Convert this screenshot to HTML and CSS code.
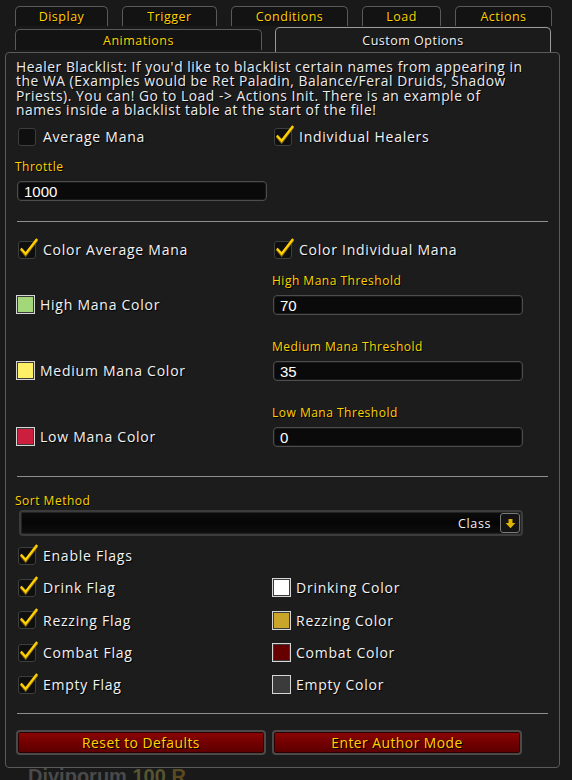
FILE: index.html
```html
<!DOCTYPE html>
<html>
<head>
<meta charset="utf-8">
<link rel="stylesheet" href="styles.css">
</head>
<body>
<div class="tabs">
  <div class="tab-row">
    <div class="tab w-display">Display</div>
    <div class="tab w-trigger">Trigger</div>
    <div class="tab w-cond">Conditions</div>
    <div class="tab w-load">Load</div>
    <div class="tab w-actions">Actions</div>
  </div>
  <div class="tab-row row2">
    <div class="tab w-anim">Animations</div>
    <div class="tab active w-custom">Custom Options</div>
  </div>
</div>

<div class="panel">
  <p class="desc">Healer Blacklist: If you'd like to blacklist certain names from appearing in<br>the WA (Examples would be Ret Paladin, Balance/Feral Druids, Shadow<br>Priests). You can! Go to Load -&gt; Actions Init. There is an example of<br>names inside a blacklist table at the start of the file!</p>

  <div class="grid2 check-row first">
    <div class="cb"><span class="box"></span><span class="lbl">Average Mana</span></div>
    <div class="cb"><span class="box checked"><svg class="tick" viewBox="0 0 22 22"><polyline class="tick-shade" points="3,12 8,18 20,2"/><polyline class="tick-main" points="3,11 8,16.5 20,1"/></svg></span><span class="lbl">Individual Healers</span></div>
  </div>

  <div class="gold throttle-label">Throttle</div>
  <div class="input throttle">1000</div>

  <div class="sep sep1"></div>

  <div class="grid2 check-row color-row">
    <div class="cb"><span class="box checked"><svg class="tick" viewBox="0 0 22 22"><polyline class="tick-shade" points="3,12 8,18 20,2"/><polyline class="tick-main" points="3,11 8,16.5 20,1"/></svg></span><span class="lbl">Color Average Mana</span></div>
    <div class="cb"><span class="box checked"><svg class="tick" viewBox="0 0 22 22"><polyline class="tick-shade" points="3,12 8,18 20,2"/><polyline class="tick-main" points="3,11 8,16.5 20,1"/></svg></span><span class="lbl">Color Individual Mana</span></div>
  </div>

  <div class="thr high">
    <div></div>
    <div class="gold">High Mana Threshold</div>
    <div class="sw-row"><span class="swatch c-green"></span><span class="lbl">High Mana Color</span></div>
    <div class="input">70</div>
  </div>

  <div class="thr">
    <div></div>
    <div class="gold">Medium Mana Threshold</div>
    <div class="sw-row"><span class="swatch c-yellow"></span><span class="lbl">Medium Mana Color</span></div>
    <div class="input">35</div>
  </div>

  <div class="thr">
    <div></div>
    <div class="gold">Low Mana Threshold</div>
    <div class="sw-row"><span class="swatch c-red"></span><span class="lbl">Low Mana Color</span></div>
    <div class="input">0</div>
  </div>

  <div class="sep sep2"></div>

  <div class="gold sort-label">Sort Method</div>
  <div class="dropdown">
    <span class="dd-text">Class</span>
    <span class="dd-btn"><svg viewBox="0 0 10 10"><path d="M3.2 0.8h3.6v3.8h2.6L5 9.4 0.6 4.6h2.6z"/></svg></span>
  </div>

  <div class="grid2 check-row enable-row">
    <div class="cb"><span class="box checked"><svg class="tick" viewBox="0 0 22 22"><polyline class="tick-shade" points="3,12 8,18 20,2"/><polyline class="tick-main" points="3,11 8,16.5 20,1"/></svg></span><span class="lbl">Enable Flags</span></div>
  </div>

  <div class="grid2 check-row flag-row">
    <div class="cb"><span class="box checked"><svg class="tick" viewBox="0 0 22 22"><polyline class="tick-shade" points="3,12 8,18 20,2"/><polyline class="tick-main" points="3,11 8,16.5 20,1"/></svg></span><span class="lbl">Drink Flag</span></div>
    <div class="sw-row"><span class="swatch c-white"></span><span class="lbl">Drinking Color</span></div>
  </div>
  <div class="grid2 check-row flag-row">
    <div class="cb"><span class="box checked"><svg class="tick" viewBox="0 0 22 22"><polyline class="tick-shade" points="3,12 8,18 20,2"/><polyline class="tick-main" points="3,11 8,16.5 20,1"/></svg></span><span class="lbl">Rezzing Flag</span></div>
    <div class="sw-row"><span class="swatch c-gold"></span><span class="lbl">Rezzing Color</span></div>
  </div>
  <div class="grid2 check-row flag-row">
    <div class="cb"><span class="box checked"><svg class="tick" viewBox="0 0 22 22"><polyline class="tick-shade" points="3,12 8,18 20,2"/><polyline class="tick-main" points="3,11 8,16.5 20,1"/></svg></span><span class="lbl">Combat Flag</span></div>
    <div class="sw-row"><span class="swatch c-maroon"></span><span class="lbl">Combat Color</span></div>
  </div>
  <div class="grid2 check-row flag-row">
    <div class="cb"><span class="box checked"><svg class="tick" viewBox="0 0 22 22"><polyline class="tick-shade" points="3,12 8,18 20,2"/><polyline class="tick-main" points="3,11 8,16.5 20,1"/></svg></span><span class="lbl">Empty Flag</span></div>
    <div class="sw-row"><span class="swatch c-grey"></span><span class="lbl">Empty Color</span></div>
  </div>

  <div class="sep sep3"></div>

  <div class="buttons">
    <div class="btn">Reset to Defaults</div>
    <div class="btn">Enter Author Mode</div>
  </div>
</div>
<div class="behind">Diviporum <span class="behind-num">100</span> <span class="behind-r">R</span></div>
</body>
</html>
```

FILE: styles.css
```css
html, body {
  margin: 0;
  padding: 0;
}
body {
  width: 572px;
  height: 780px;
  overflow: hidden;
  background: #191919;
  font-family: "Open Sans", "Noto Sans", sans-serif;
  color: #f0f0f0;
}

/* Tabs */
.tabs {
  padding: 6px 0 0 15px;
}
.tab-row {
  display: flex;
  gap: 14px;
}
.tab {
  height: 20px;
  box-sizing: border-box;
  border: 1px solid #5a5a5a;
  border-bottom: none;
  border-radius: 5px 5px 0 0;
  background: #131313;
  color: #ffd100;
  font-size: 12.5px;
  letter-spacing: 0.5px;
  display: flex;
  align-items: center;
  justify-content: center;
  text-shadow: 1px 1px 0 #000;
}
.w-display { width: 93px; }
.w-trigger { width: 95px; }
.w-cond { width: 117px; }
.w-load { width: 79px; }
.w-actions { width: 97px; }

.row2 {
  gap: 13px;
  height: 25px;
  margin-top: 1px;
}
.w-anim {
  width: 247px;
  height: 21px;
  margin-top: 2px;
}
.w-custom {
  width: 276px;
  height: 25px;
  color: #f2f2f2;
  border-color: #9a9a9a;
  background: #1b1b1b;
}

/* Panel */
.panel {
  margin-left: 5px;
  width: 555px;
  height: 716px;
  box-sizing: border-box;
  border: 1px solid #5a5a5a;
  border-radius: 4px;
  background: #1c1c1c;
  padding: 7px 11px 0 11px;
}
.desc {
  margin: 0 0 0 -1px;
  font-size: 13.8px;
  letter-spacing: 0.55px;
  line-height: 14.3px;
  color: #ececec;
  white-space: nowrap;
  text-shadow: 1px 1px 0 #000;
}

.grid2 {
  display: grid;
  grid-template-columns: 256px 1fr;
}
.check-row {
  height: 18px;
  align-items: center;
}
.check-row.first { margin-top: 10px; }
.color-row { margin-top: 18px; }
.enable-row { margin-top: 10px; }
.flag-row { margin-top: 14.3px; }

.cb {
  display: flex;
  align-items: center;
  gap: 7px;
}
.box {
  width: 18px;
  height: 18px;
  box-sizing: border-box;
  border: 1px solid #3e3e3e;
  border-radius: 3px;
  background: #0f0f0f;
  position: relative;
  margin-left: 1px;
  flex: none;
}
.tick {
  position: absolute;
  left: -1px;
  top: -4px;
  width: 21px;
  height: 21px;
  overflow: visible;
}
.tick-shade {
  fill: none;
  stroke: #8a6a00;
  stroke-width: 2.6;
  stroke-linejoin: miter;
}
.tick-main {
  fill: none;
  stroke: #ffd100;
  stroke-width: 2.4;
  stroke-linejoin: miter;
}
.lbl {
  font-size: 14px;
  letter-spacing: 0.75px;
  color: #f2f2f2;
  white-space: nowrap;
  text-shadow: 1px 1px 1px #000;
}

.gold {
  color: #ffd100;
  font-size: 12px;
  letter-spacing: 0.5px;
  line-height: 14px;
  height: 14px;
  white-space: nowrap;
  text-shadow: 1px 1px 0 #000;
}
.throttle-label {
  margin-top: 15px;
  margin-left: -2px;
}

.input {
  height: 20px;
  box-sizing: border-box;
  border: 1px solid #4d4d4d;
  border-radius: 4px;
  background: #0a0a0a;
  box-shadow: inset 0 0 0 1px #1a1a1a;
  font-family: "Liberation Sans Narrow", "Liberation Sans", sans-serif;
  font-size: 15px;
  color: #ffffff;
  padding-left: 6px;
  display: flex;
  align-items: center;
  width: 250px;
}
.throttle {
  margin-top: 7px;
}

.sep {
  height: 1px;
  background: #8e8e8e;
}
.sep1 { margin-top: 20px; }
.sep2 { margin-top: 29px; }
.sep3 { margin-top: 20px; }

.thr {
  display: grid;
  grid-template-columns: 256px 250px;
  grid-template-rows: 14px 20px;
  row-gap: 7px;
  margin-top: 25px;
  align-items: center;
}
.thr .gold { margin-left: -1px; }
.thr.high { margin-top: 16px; }

.sw-row {
  display: flex;
  align-items: center;
  gap: 5px;
  margin-left: -1px;
}
.swatch {
  width: 19px;
  height: 19px;
  box-sizing: border-box;
  border: 1px solid #d6d6d6;
  box-shadow: inset 0 0 0 1px #3a3a3a;
  flex: none;
}
.thr .sw-row { margin-top: -2px; }
.c-green { background: #a2d77a; }
.c-yellow { background: #ffef66; }
.c-red { background: #cc1f3e; }
.c-white { background: #ffffff; }
.c-gold { background: #c9a62a; }
.c-maroon { background: #660000; }
.c-grey { background: #3b3b3b; }

.sort-label {
  margin-top: 17px;
  margin-left: -2px;
}
.dropdown {
  margin-top: 2px;
  margin-left: 2px;
  width: 504px;
  height: 26px;
  box-sizing: border-box;
  border: 2px solid #3c3c3c;
  border-radius: 4px;
  background: linear-gradient(#0c0c0c, #050505 50%, #101010);
  box-shadow: inset 0 0 0 1px #222;
  display: flex;
  align-items: center;
  justify-content: flex-end;
  padding-right: 1px;
}
.dd-text {
  font-size: 12.5px;
  letter-spacing: 0.6px;
  color: #f2f2f2;
  margin-right: 9px;
}
.dd-btn {
  width: 20px;
  height: 20px;
  box-sizing: border-box;
  border: 1px solid #7a7a7a;
  border-radius: 3px;
  background: #141414;
  display: flex;
  align-items: center;
  justify-content: center;
}
.dd-btn svg {
  width: 11px;
  height: 11px;
  fill: #e0b400;
}

.buttons {
  margin-top: 16px;
  margin-left: -1px;
  display: grid;
  grid-template-columns: 250px 250px;
  gap: 6px;
}
.btn {
  height: 25px;
  box-sizing: border-box;
  border: 2px solid #4a4a4a;
  border-radius: 4px;
  background: linear-gradient(#8c0505, #6e0000 60%, #5a0000);
  box-shadow: inset 0 0 0 1px #2a0000;
  color: #ffd100;
  font-size: 13.8px;
  letter-spacing: 0.5px;
  display: flex;
  align-items: center;
  justify-content: center;
  text-shadow: 1px 1px 0 #000;
}

.behind {
  margin: -3px 0 0 28px;
  font-family: "Liberation Sans", sans-serif;
  font-weight: bold;
  font-size: 20px;
  line-height: 22px;
  color: #4a4a4a;
  white-space: nowrap;
}
.behind-num { color: #575530; }
.behind-r { color: #5a4a20; }
```
